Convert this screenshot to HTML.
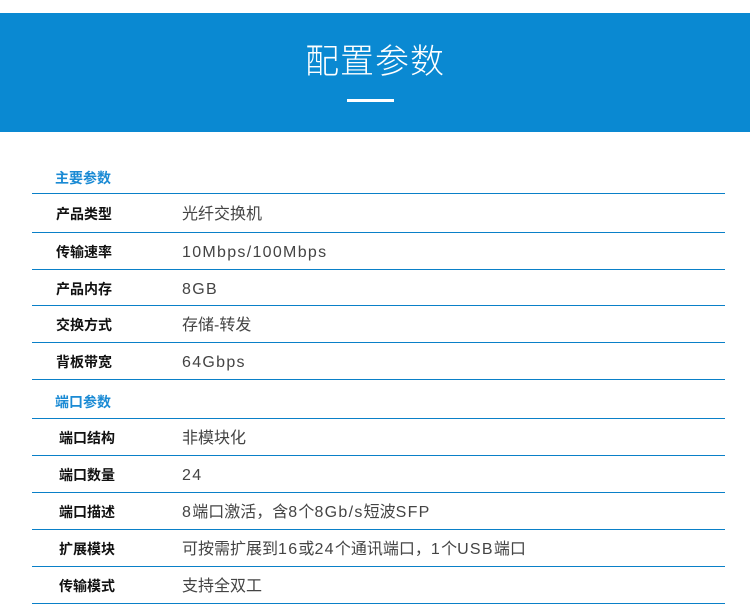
<!DOCTYPE html>
<html><head><meta charset="utf-8"><style>
body{margin:0;width:750px;height:614px;background:#fff;position:relative;overflow:hidden;font-family:"Liberation Sans","Noto Sans CJK SC",sans-serif}
.ban{position:absolute;left:0;top:13px;width:750px;height:119px;background:#0a89d2}
.t{position:absolute;left:0;width:750px;top:26px;line-height:46px;text-align:center;color:#fff;font-size:34px;font-weight:300;letter-spacing:1px}
.bar{position:absolute;left:347px;top:86px;width:47px;height:3px;background:#fff}
.ln{position:absolute;left:32px;width:693px;height:1px;background:#0a80c8}
.h{position:absolute;font-size:14px;line-height:20px;font-weight:bold;color:#1a8ad4}
.k{position:absolute;font-size:14px;line-height:20px;font-weight:bold;color:#111}
.v{position:absolute;left:182px;font-size:16px;line-height:20px;color:#444;margin-top:3px}
.v b{font-weight:normal;letter-spacing:1.3px}
</style></head><body>
<div class="ban"><div class="t">配置参数</div><div class="bar"></div></div>
<div class="h" style="left:55px;top:168px">主要参数</div>
<div class="ln" style="top:193px"></div>
<div class="k" style="left:56px;top:204px">产品类型</div><div class="v" style="top:202px">光纤交换机</div>
<div class="ln" style="top:232px"></div>
<div class="k" style="left:56px;top:242px">传输速率</div><div class="v" style="top:240px"><b>10Mbps/100Mbps</b></div>
<div class="ln" style="top:269px"></div>
<div class="k" style="left:56px;top:279px">产品内存</div><div class="v" style="top:277px"><b>8GB</b></div>
<div class="ln" style="top:305px"></div>
<div class="k" style="left:56px;top:315px">交换方式</div><div class="v" style="top:313px">存储-转发</div>
<div class="ln" style="top:342px"></div>
<div class="k" style="left:56px;top:352px">背板带宽</div><div class="v" style="top:350px"><b>64Gbps</b></div>
<div class="ln" style="top:379px"></div>
<div class="h" style="left:55px;top:392px">端口参数</div>
<div class="ln" style="top:418px"></div>
<div class="k" style="left:59px;top:428px">端口结构</div><div class="v" style="top:426px">非模块化</div>
<div class="ln" style="top:455px"></div>
<div class="k" style="left:59px;top:465px">端口数量</div><div class="v" style="top:463px"><b>24</b></div>
<div class="ln" style="top:492px"></div>
<div class="k" style="left:59px;top:502px">端口描述</div><div class="v" style="top:500px"><b>8</b>端口激活，含<b>8</b>个<b>8Gb/s</b>短波<b>SFP</b></div>
<div class="ln" style="top:529px"></div>
<div class="k" style="left:59px;top:539px">扩展模块</div><div class="v" style="top:537px">可按需扩展到<b>16</b>或<b>24</b>个通讯端口，<b>1</b>个<b>USB</b>端口</div>
<div class="ln" style="top:566px"></div>
<div class="k" style="left:59px;top:576px">传输模式</div><div class="v" style="top:574px">支持全双工</div>
<div class="ln" style="top:603px"></div>
</body></html>
